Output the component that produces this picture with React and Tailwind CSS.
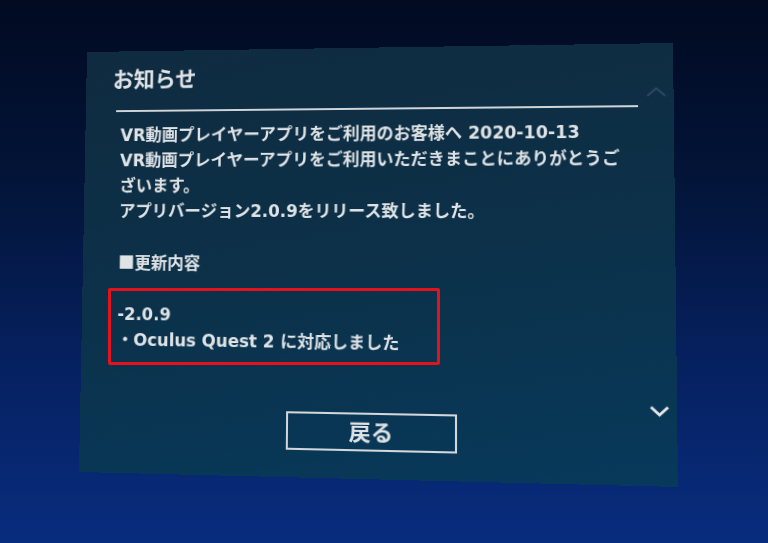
export default function App() {
  const lines = [
    "VR動画プレイヤーアプリをご利用のお客様へ 2020-10-13",
    "VR動画プレイヤーアプリをご利用いただきまことにありがとうご",
    "ざいます。",
    "アプリバージョン2.0.9をリリース致しました。",
    "\u00a0",
    null,
    "\u00a0",
    "-2.0.9",
    "・Oculus Quest 2 に対応しました",
  ];
  return (
    <div
      className="relative w-[768px] h-[543px] overflow-hidden bg-[linear-gradient(180deg,#010a21_0%,#03153a_35%,#062263_70%,#082c7e_100%)]"
      style={{ fontFamily: '"DejaVu Sans", "Noto Sans CJK JP", sans-serif' }}
    >
      <div className="flex w-[590px] h-[430px] origin-top-left [transform:matrix3d(0.932381,-0.019141,0,-0.0000904,-0.02251,0.953409,0,-0.0000494,0,0,1,0,87,52,0,1)] bg-[linear-gradient(172deg,#0f2b40_0%,#0c3149_50%,#07395b_100%)] text-[#dfe3e6]">
        <div className="flex flex-col w-[556px] pl-[28px] pt-[15px]">
          <div className="text-[22px] leading-[30px] font-bold">お知らせ</div>
          <div className="mt-[16px] ml-[4px] w-[524px] h-[2px] bg-[#cfd4d8]" />
          <div className="mt-[11px] pl-[9px] text-[17px] leading-[26px] font-bold whitespace-nowrap">
            {lines.map((l, i) =>
              l === null ? (
                <div key={i}>
                  <span className="font-['Noto_Sans_CJK_JP']">■</span>更新内容
                </div>
              ) : (
                <div key={i}>{l}</div>
              )
            )}
          </div>
          <div className="mt-[56px] ml-[183px] w-[169px] h-[38px] border-2 border-[#d3d7db] flex items-center justify-center text-[22px] font-bold">
            戻る
          </div>
        </div>
        <div className="flex flex-col pl-[8px]">
          <svg className="mt-[43px]" width="19" height="10" viewBox="0 0 19 10">
            <polyline points="1,9 9.5,1.5 18,9" fill="none" stroke="#2c4a60" strokeWidth="2" />
          </svg>
          <svg className="mt-[300px]" width="19" height="11" viewBox="0 0 19 11">
            <polyline points="1.5,1.5 9.5,9 17.5,1.5" fill="none" stroke="#e4e7ea" strokeWidth="2.6" />
          </svg>
        </div>
      </div>
      <div className="absolute left-[108px] top-[288px] w-[332px] h-[77px] border-[3px] border-[#e3121c] rounded-[2px]" />
    </div>
  );
}
